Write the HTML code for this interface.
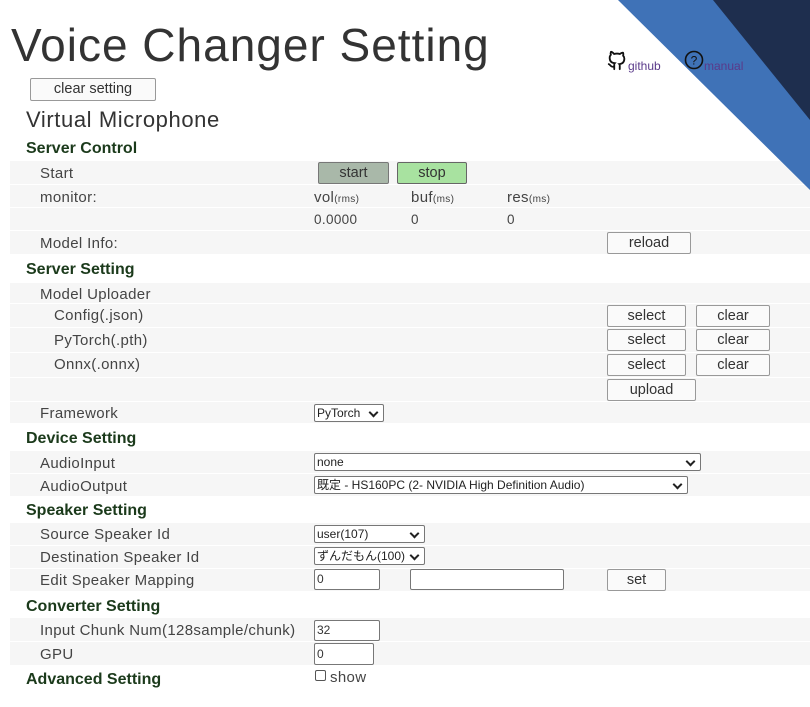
<!DOCTYPE html>
<html><head><meta charset="utf-8"><style>
*{box-sizing:border-box;margin:0;padding:0}
body{width:810px;height:707px;position:relative;overflow:hidden;background:#fff;font-family:"Liberation Sans","Noto Sans CJK JP",sans-serif;color:#333}
.a{position:absolute;white-space:nowrap}
.row{position:absolute;left:10px;width:800px;background:#f6f6f6}
.lbl{position:absolute;font-size:15px;letter-spacing:0.35px;color:#444;white-space:nowrap}
.h{position:absolute;left:26px;font-size:16px;font-weight:bold;color:#1b3a1b}
.btn{position:absolute;border:1px solid #999;background:#fafafa;font-size:14.5px;color:#333;text-align:center;border-radius:2px;z-index:3}
.sel{position:absolute;border:1px solid #777;background:#fff;font-size:12px;color:#222;padding-left:2px;border-radius:2px}
.sel:after{content:"";position:absolute;right:6px;top:4px;width:5px;height:5px;border-right:2px solid #222;border-bottom:2px solid #222;transform:rotate(45deg)}
.inp{position:absolute;border:1px solid #777;background:#fff;font-size:12px;padding-left:2px;border-radius:2px}
</style></head><body>
<div class="row" style="top:161px;height:23px"></div>
<div class="row" style="top:185px;height:22px"></div>
<div class="row" style="top:208px;height:22px"></div>
<div class="row" style="top:231px;height:23px"></div>
<svg class="a" style="left:0;top:0;z-index:1" width="810" height="707"><polygon points="618,0 810,0 810,190" fill="#3f72b7"/><polygon points="713,0 810,0 810,120" fill="#1e2e4e"/></svg>
<div class="a" style="left:11px;top:18px;font-size:46px;color:#333;letter-spacing:1px">Voice Changer Setting</div>
<svg class="a" style="left:606px;top:49px;z-index:2" width="22" height="22" viewBox="0 0 24 24" fill="none" stroke="#111" stroke-width="2" stroke-linecap="round"><path d="M9 19c-4 1.5-4-2-6-2.5M15 22v-3.5c0-1 .1-1.4-.5-2 2.8-.3 5.5-1.4 5.5-6a4.6 4.6 0 0 0-1.3-3.2 4.2 4.2 0 0 0-.1-3.2s-1.1-.3-3.5 1.3a12 12 0 0 0-6.2 0C6.5 2.8 5.4 3.1 5.4 3.1a4.2 4.2 0 0 0-.1 3.2A4.6 4.6 0 0 0 4 9.5c0 4.6 2.7 5.7 5.5 6-.6.6-.6 1.2-.5 2V22"/></svg>
<div class="a" style="left:628px;top:59px;font-size:12px;color:#5a3a8a;z-index:2">github</div>
<svg class="a" style="left:684px;top:50px;z-index:2" width="20" height="20" viewBox="0 0 20 20"><circle cx="10" cy="10" r="8.5" fill="none" stroke="#111" stroke-width="1.6"/><text x="10" y="14.5" font-size="12" text-anchor="middle" fill="#111" font-family="Liberation Sans">?</text></svg>
<div class="a" style="left:704px;top:59px;font-size:12px;color:#5a3a8a;z-index:2">manual</div>
<div class="btn" style="left:30px;top:78px;width:126px;height:23px;line-height:21px">clear setting</div>
<div class="a" style="left:26px;top:107px;font-size:22px;letter-spacing:0.6px;color:#333">Virtual Microphone</div>

<div class="h" style="top:140px">Server Control</div>
<div class="lbl" style="left:40px;top:165px">Start</div>
<div class="btn" style="left:318px;top:162px;width:71px;height:22px;line-height:20px;background:#a9b8a9;border-color:#777">start</div>
<div class="btn" style="left:397px;top:162px;width:70px;height:22px;line-height:20px;background:#a8e2a0;border-color:#666">stop</div>
<div class="lbl" style="left:40px;top:189px">monitor:</div>
<div class="lbl" style="left:314px;top:189px">vol<span style="font-size:10px">(rms)</span></div>
<div class="lbl" style="left:411px;top:189px">buf<span style="font-size:10px">(ms)</span></div>
<div class="lbl" style="left:507px;top:189px">res<span style="font-size:10px">(ms)</span></div>
<div class="lbl" style="left:314px;top:212px;font-size:13.5px">0.0000</div>
<div class="lbl" style="left:411px;top:212px;font-size:13.5px">0</div>
<div class="lbl" style="left:507px;top:212px;font-size:13.5px">0</div>
<div class="lbl" style="left:40px;top:235px">Model Info:</div>
<div class="btn" style="left:607px;top:232px;width:84px;height:22px;line-height:20px">reload</div>

<div class="h" style="top:261px">Server Setting</div>
<div class="row" style="top:283px;height:20px"></div>
<div class="row" style="top:304px;height:23px"></div>
<div class="row" style="top:328px;height:24px"></div>
<div class="row" style="top:353px;height:24px"></div>
<div class="row" style="top:378px;height:23px"></div>
<div class="row" style="top:402px;height:21px"></div>
<div class="lbl" style="left:40px;top:286px">Model Uploader</div>
<div class="lbl" style="left:54px;top:307px">Config(.json)</div>
<div class="lbl" style="left:54px;top:332px">PyTorch(.pth)</div>
<div class="lbl" style="left:54px;top:356px">Onnx(.onnx)</div>
<div class="btn" style="left:607px;top:305px;width:79px;height:22px;line-height:20px">select</div>
<div class="btn" style="left:696px;top:305px;width:74px;height:22px;line-height:20px">clear</div>
<div class="btn" style="left:607px;top:329px;width:79px;height:22px;line-height:20px">select</div>
<div class="btn" style="left:696px;top:329px;width:74px;height:22px;line-height:20px">clear</div>
<div class="btn" style="left:607px;top:354px;width:79px;height:22px;line-height:20px">select</div>
<div class="btn" style="left:696px;top:354px;width:74px;height:22px;line-height:20px">clear</div>
<div class="btn" style="left:607px;top:379px;width:89px;height:22px;line-height:20px">upload</div>
<div class="lbl" style="left:40px;top:405px">Framework</div>
<div class="sel" style="left:314px;top:404px;width:70px;height:18px;line-height:16px">PyTorch</div>

<div class="h" style="top:430px">Device Setting</div>
<div class="row" style="top:451px;height:22px"></div>
<div class="row" style="top:474px;height:22px"></div>
<div class="lbl" style="left:40px;top:455px">AudioInput</div>
<div class="lbl" style="left:40px;top:478px">AudioOutput</div>
<div class="sel" style="left:314px;top:453px;width:387px;height:18px;line-height:16px">none</div>
<div class="sel" style="left:314px;top:476px;width:374px;height:18px;line-height:16px">既定 - HS160PC (2- NVIDIA High Definition Audio)</div>

<div class="h" style="top:502px">Speaker Setting</div>
<div class="row" style="top:523px;height:22px"></div>
<div class="row" style="top:546px;height:22px"></div>
<div class="row" style="top:569px;height:22px"></div>
<div class="lbl" style="left:40px;top:526px">Source Speaker Id</div>
<div class="lbl" style="left:40px;top:549px">Destination Speaker Id</div>
<div class="lbl" style="left:40px;top:572px">Edit Speaker Mapping</div>
<div class="sel" style="left:314px;top:525px;width:111px;height:18px;line-height:16px">user(107)</div>
<div class="sel" style="left:314px;top:547px;width:111px;height:18px;line-height:16px">ずんだもん(100)</div>
<div class="inp" style="left:314px;top:569px;width:66px;height:21px;line-height:19px">0</div>
<div class="inp" style="left:410px;top:569px;width:154px;height:21px"></div>
<div class="btn" style="left:607px;top:569px;width:59px;height:22px;line-height:20px">set</div>

<div class="h" style="top:598px">Converter Setting</div>
<div class="row" style="top:618px;height:23px"></div>
<div class="row" style="top:642px;height:23px"></div>
<div class="lbl" style="left:40px;top:622px">Input Chunk Num(128sample/chunk)</div>
<div class="lbl" style="left:40px;top:646px">GPU</div>
<div class="inp" style="left:314px;top:620px;width:66px;height:21px;line-height:19px">32</div>
<div class="inp" style="left:314px;top:643px;width:60px;height:22px;line-height:20px">0</div>

<div class="h" style="top:671px">Advanced Setting</div>
<div class="a" style="left:315px;top:670px;width:11px;height:11px;border:1px solid #555;border-radius:2px"></div>
<div class="lbl" style="left:330px;top:669px">show</div>
</body></html>
